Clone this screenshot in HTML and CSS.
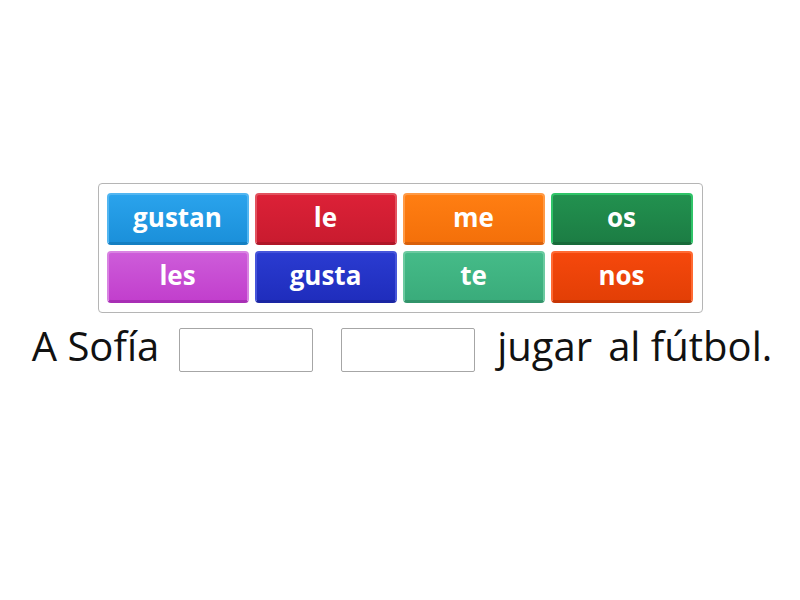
FILE: index.html
```html
<!DOCTYPE html>
<html lang="es">
<head>
<meta charset="utf-8">
<title>Completar la frase</title>
<link rel="stylesheet" href="styles.css">
</head>
<body>
<main class="page">
  <div class="bank">
    <div class="tile t-blue">gustan</div>
    <div class="tile t-red">le</div>
    <div class="tile t-orange">me</div>
    <div class="tile t-green">os</div>
    <div class="tile t-pink">les</div>
    <div class="tile t-navy">gusta</div>
    <div class="tile t-mint">te</div>
    <div class="tile t-flame">nos</div>
  </div>
  <div class="sentence">
    <span class="word w-first">A Sofía</span>
    <span class="slot s-first"></span>
    <span class="slot s-second"></span>
    <span class="word w-jugar">jugar</span>
    <span class="word w-last">al fútbol.</span>
  </div>
</main>
</body>
</html>
```

FILE: styles.css
```css
html, body {
  margin: 0;
  padding: 0;
  background: #ffffff;
}

body {
  font-family: "Open Sans", "Liberation Sans", sans-serif;
  width: 800px;
  height: 600px;
  overflow: hidden;
}

.page {
  display: flex;
  flex-direction: column;
  align-items: center;
  padding-top: 183px;
}

.bank {
  display: grid;
  grid-template-columns: repeat(4, 142px);
  grid-auto-rows: 52px;
  gap: 6px;
  padding: 9px 9px 9px 8px;
  border: 1px solid #b5b5b5;
  border-radius: 4px;
  background: #ffffff;
}

.tile {
  box-sizing: border-box;
  display: flex;
  align-items: center;
  justify-content: center;
  color: #ffffff;
  font-weight: 700;
  font-size: 26px;
  border-radius: 4px;
  border: 2px solid;
  border-bottom-width: 3px;
  padding-bottom: 3px;
}

.t-blue   { background: linear-gradient(#2aa3ec, #1b90da); border-color: #52b6f1 #52b6f1 #147fc2; }
.t-red    { background: linear-gradient(#dc2137, #c91b2f); border-color: #e2535f #e2535f #b01628; }
.t-orange { background: linear-gradient(#ff7e12, #f4700a); border-color: #ff9a45 #ff9a45 #d9600a; }
.t-green  { background: linear-gradient(#22914f, #1c7d44); border-color: #2fc468 #2fc468 #186b3a; }
.t-pink   { background: linear-gradient(#cd5cd9, #c23fcd); border-color: #d983e2 #d983e2 #a82fb5; }
.t-navy   { background: linear-gradient(#2a3bd0, #1f2dbd); border-color: #4655da #4655da #1a26a3; }
.t-mint   { background: linear-gradient(#45bb88, #3aac7b); border-color: #6ccaa0 #6ccaa0 #31946a; }
.t-flame  { background: linear-gradient(#f5480c, #e33f06); border-color: #ff6a33 #ff6a33 #c73504; }

.sentence {
  display: flex;
  align-items: flex-start;
  margin-top: 15px;
  margin-left: 4px;
  font-size: 40px;
  color: #111111;
}

.word {
  line-height: 36px;
  white-space: nowrap;
}

.slot {
  box-sizing: border-box;
  width: 134px;
  height: 44px;
  border: 1px solid #a6a6a6;
  border-radius: 2px;
  background: #ffffff;
}

.s-first  { margin-left: 20px; }
.s-second { margin-left: 28px; }
.w-jugar  { margin-left: 22px; }
.w-last   { margin-left: 16px; }
```
